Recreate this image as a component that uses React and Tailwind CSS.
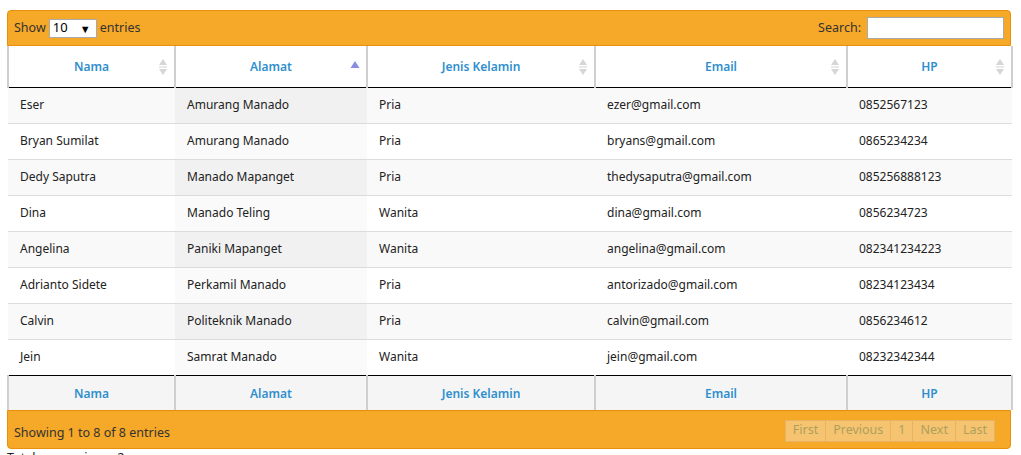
import { useState } from "react";

// jQuery-UI "ui-lightness" styled DataTable of visitors.
const ROWS = [
  ["Eser", "Amurang Manado", "Pria", "ezer@gmail.com", "0852567123"],
  ["Bryan Sumilat", "Amurang Manado", "Pria", "bryans@gmail.com", "0865234234"],
  ["Dedy Saputra", "Manado Mapanget", "Pria", "thedysaputra@gmail.com", "085256888123"],
  ["Dina", "Manado Teling", "Wanita", "dina@gmail.com", "0856234723"],
  ["Angelina", "Paniki Mapanget", "Wanita", "angelina@gmail.com", "082341234223"],
  ["Adrianto Sidete", "Perkamil Manado", "Pria", "antorizado@gmail.com", "08234123434"],
  ["Calvin", "Politeknik Manado", "Pria", "calvin@gmail.com", "0856234612"],
  ["Jein", "Samrat Manado", "Wanita", "jein@gmail.com", "08232342344"],
];

const COLS = [
  { label: "Nama", w: 167 },
  { label: "Alamat", w: 192, sorted: true },
  { label: "Jenis Kelamin", w: 228 },
  { label: "Email", w: 252 },
  { label: "HP", w: 165 },
];

function SortBoth() {
  return (
    <svg width="10" height="18" viewBox="0 0 10 18" className="shrink-0">
      <path d="M5 1 L9 7 L1 7 Z" fill="#d6d6d6" />
      <rect x="1" y="8.2" width="8" height="1.6" fill="#e4e4e4" />
      <path d="M5 17 L9 11 L1 11 Z" fill="#d6d6d6" />
    </svg>
  );
}

function SortAsc() {
  return (
    <svg width="10" height="18" viewBox="0 0 10 18" className="shrink-0">
      <path d="M5 3 L9.5 10 L0.5 10 Z" fill="#8a8ee2" />
    </svg>
  );
}

export default function App() {
  const [len, setLen] = useState("10");
  const [q, setQ] = useState("");
  const font = { fontFamily: '"Noto Sans", "Open Sans", sans-serif' };

  return (
    <div className="bg-white text-[12.5px] text-[#222]" style={font}>
      <div className="ml-[7px] pt-[10px] w-[1004px]">
        {/* top toolbar */}
        <div className="h-[36px] bg-[#f6a828] border border-[#e78f08] rounded-tl-[4px] rounded-tr-[4px] flex items-center justify-between px-[6px] text-[#333]">
          <div className="flex items-center gap-[3px]">
            <span>Show</span>
            <div className="relative w-[48px] h-[19px] bg-white border border-[#aaa] flex items-center px-[3px] text-[13px] text-black">
              <select value={len} onChange={e => setLen(e.target.value)} className="absolute inset-0 opacity-0">
                <option>10</option><option>25</option><option>50</option><option>100</option>
              </select>
              <span>{len}</span>
              <span className="ml-auto text-[11px] leading-none pr-[2px]">▼</span>
            </div>
            <span>entries</span>
          </div>
          <div className="flex items-center gap-[6px]">
            <span>Search:</span>
            <input value={q} onChange={e => setQ(e.target.value)}
              className="w-[137px] h-[22px] bg-white border border-[#aaa] outline-none px-1" />
          </div>
        </div>

        <table className="table-fixed border-collapse w-[1004px] text-[12px]">
          <colgroup>
            {COLS.map(c => <col key={c.label} style={{ width: c.w }} />)}
          </colgroup>
          <thead>
            <tr className="h-[41px] bg-white border-b border-black">
              {COLS.map(c => (
                <th key={c.label} className="border-x-2 border-[#cfcfcf] font-semibold text-[#2f8fce] p-0">
                  <div className="relative flex items-center justify-center h-[40px] pt-[2px]">
                    <span>{c.label}</span>
                    <span className="absolute right-[6px] top-[12px]">{c.sorted ? <SortAsc /> : <SortBoth />}</span>
                  </div>
                </th>
              ))}
            </tr>
          </thead>
          <tbody>
            {ROWS.map((r, i) => (
              <tr key={i} className={"h-[36px] border-t border-[#dcdcdc] first:border-t-0 " + (i % 2 === 0 ? "bg-[#f9f9f9]" : "bg-white")}>
                {r.map((v, j) => (
                  <td key={j} className={"pl-[12px] pr-2 whitespace-nowrap " + (j === 1 ? (i % 2 === 0 ? "bg-[#f1f1f1]" : "bg-[#fafafa]") : "")}>
                    {v}
                  </td>
                ))}
              </tr>
            ))}
          </tbody>
          <tfoot>
            <tr className="h-[35px] bg-[#f5f5f5] border-t border-black">
              {COLS.map(c => (
                <th key={c.label} className="border-x-2 border-[#cfcfcf] font-semibold text-[#2f8fce] p-0 pt-[3px]">{c.label}</th>
              ))}
            </tr>
          </tfoot>
        </table>

        {/* bottom toolbar */}
        <div className="h-[39px] bg-[#f6a828] border border-[#e78f08] rounded-bl-[4px] rounded-br-[4px] flex items-center justify-between pl-[6px] pr-[15px] text-[#333]">
          <span className="pt-[8px]">Showing 1 to 8 of 8 entries</span>
          <div className="flex items-stretch h-[22px] mt-[2px] opacity-35 text-[#1c94c4]">
            {["First", "Previous", "1", "Next", "Last"].map(b => (
              <span key={b} className="bg-[#f6f6f6] border border-[#cccccc] -ml-px first:ml-0 flex items-center px-[7px]">{b}</span>
            ))}
          </div>
        </div>

        <div className="leading-[16px] pt-[1px]">Total pengunjung: 2</div>
      </div>
    </div>
  );
}
